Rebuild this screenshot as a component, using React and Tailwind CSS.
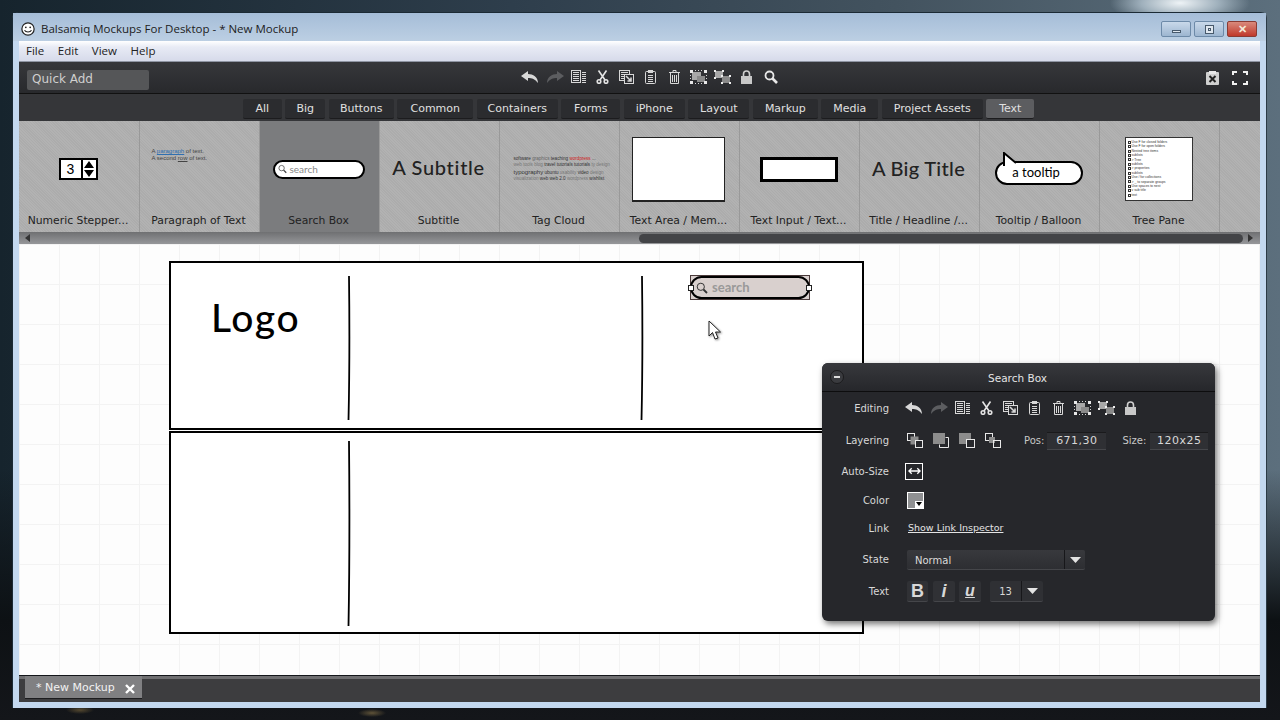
import React from "react";

const Undo = ({ c = "w-[18px] h-[14px] text-[#d8d8d8]" }) => (
  <svg viewBox="0 0 18 14" className={c} fill="currentColor"><path d="M7 1 L0 6 L7 11 V8 C11 8 14 9 17 13 C17 7 12 4 7 4 Z" /></svg>
);
const Redo = ({ c = "w-[18px] h-[14px] text-[#5c5d60]" }) => (
  <svg viewBox="0 0 18 14" className={c} fill="currentColor"><path d="M11 1 L18 6 L11 11 V8 C7 8 4 9 1 13 C1 7 6 4 11 4 Z" /></svg>
);
const ListI = () => (
  <svg viewBox="0 0 15 14" className="w-[15px] h-[14px]" fill="none" stroke="#d8d8d8" strokeWidth="1">
    <rect x="0.5" y="0.5" width="9" height="12" />
    <path d="M2 2.5h6M2 4.5h6M2 6.5h6M2 8.5h6M2 10.5h6M11 2.5h4M11 4.5h4M11 6.5h4M11 8.5h4M11 10.5h4M11 12.5h4" />
  </svg>
);
const Cut = () => (
  <svg viewBox="0 0 13 14" className="w-[13px] h-[14px]" fill="none" stroke="#e4e4e4" strokeWidth="1.6">
    <path d="M2.5 0.5 L9 10M10.5 0.5 L4 10" />
    <circle cx="3" cy="11.5" r="1.8" />
    <circle cx="10" cy="11.5" r="1.8" />
  </svg>
);
const Paste = () => (
  <svg viewBox="0 0 15 14" className="w-[15px] h-[14px]" fill="none" stroke="#d8d8d8" strokeWidth="1">
    <rect x="0.5" y="0.5" width="10" height="10" />
    <rect x="5.5" y="4.5" width="9" height="9" fill="#2a2b2f" />
    <path d="M2 2.5h7M2 4.5h3M2 6.5h3M2 8.5h3" />
    <path d="M7 6 L12 11M12 7.5V11H8.5" strokeWidth="1.6" />
  </svg>
);
const Clip = () => (
  <svg viewBox="0 0 11 14" className="w-[11px] h-[14px]" fill="none" stroke="#d8d8d8" strokeWidth="1">
    <rect x="0.5" y="1.5" width="10" height="12" rx="1" />
    <rect x="3" y="0" width="5" height="3" fill="#d8d8d8" stroke="none" />
    <path d="M3 5.5h5M3 7.5h5M3 9.5h5M3 11.5h5" />
  </svg>
);
const Trash = () => (
  <svg viewBox="0 0 11 14" className="w-[11px] h-[14px]" fill="none" stroke="#d8d8d8" strokeWidth="1">
    <path d="M0 2.5h11M4 2.5V0.5h3v2" />
    <path d="M1.5 3V13.5H9.5V3M3.5 5v7M5.5 5v7M7.5 5v7" />
  </svg>
);
const Group = () => (
  <svg viewBox="0 0 17 14" className="w-[17px] h-[14px]">
    <path d="M2 2h9v8H2z" fill="#a8a8a8" />
    <path d="M7 6h8v6H7z" fill="#8a8a8a" />
    <path d="M0 0h3v3H0zM14 0h3v3h-3zM0 11h3v3H0zM14 11h3v3h-3z" fill="#e8e8e8" />
    <path d="M5 0.5h1M8 0.5h1M11 0.5h1M0.5 5v1M0.5 8v1M5 13.5h1M8 13.5h1M11 13.5h1M16.5 5v1M16.5 8v1" stroke="#d8d8d8" />
  </svg>
);
const Ungroup = () => (
  <svg viewBox="0 0 17 14" className="w-[17px] h-[14px]">
    <path d="M1 1h8v7H1z" fill="#a8a8a8" />
    <path d="M8 6h8v7H8z" fill="#8a8a8a" />
    <path d="M0 0h2v2H0zM8 0h2v2H8zM0 7h2v2H0zM7 5h2v2H7zM15 5h2v2h-2zM7 12h2v2H7zM15 12h2v2h-2z" fill="#eeeeee" />
  </svg>
);
const Lock = () => (
  <svg viewBox="0 0 11 14" className="w-[11px] h-[14px]">
    <path d="M2.5 6V4a3 3 0 0 1 6 0v2" fill="none" stroke="#d0d0d0" strokeWidth="1.6" />
    <rect x="0" y="6" width="11" height="8" fill="#c8c8c8" />
  </svg>
);
const Search = () => (
  <svg viewBox="0 0 14 14" className="w-[14px] h-[14px]" fill="none" stroke="#e8e8e8">
    <circle cx="5.5" cy="5.5" r="4" strokeWidth="1.8" />
    <path d="M8.5 8.5 L13 13" strokeWidth="2.6" />
  </svg>
);

const EditIcons = () => (
  <>
    <Undo />
    <span className="ml-[7px]"><Redo /></span>
    <span className="ml-[7px]"><ListI /></span>
    <span className="ml-[10px]"><Cut /></span>
    <span className="ml-[10px]"><Paste /></span>
    <span className="ml-[11px]"><Clip /></span>
    <span className="ml-[13px]"><Trash /></span>
    <span className="ml-[10px]"><Group /></span>
    <span className="ml-[7px]"><Ungroup /></span>
    <span className="ml-[10px]"><Lock /></span>
  </>
);

const Layer = ({ kind }) => (
  <svg viewBox="0 0 16 15" className="w-[16px] h-[15px]" fill="none" stroke="#e8e8e8" strokeWidth="1">
    {kind === 1 && (<><rect x="0.5" y="0.5" width="7" height="7" /><rect x="3.5" y="3.5" width="8" height="8" fill="#8c8c8c" stroke="none" /><rect x="8.5" y="7.5" width="7" height="7" fill="#26272b" /></>)}
    {kind === 2 && (<><rect x="0" y="0" width="12" height="11" fill="#8c8c8c" stroke="none" /><path d="M12.5 4.5h3v10h-9v-3" /></>)}
    {kind === 3 && (<><rect x="0" y="0" width="12" height="11" fill="#8c8c8c" stroke="none" /><rect x="7.5" y="6.5" width="8" height="8" fill="#26272b" /></>)}
    {kind === 4 && (<><rect x="0.5" y="0.5" width="7" height="7" /><rect x="4" y="4" width="6" height="6" fill="#8c8c8c" stroke="none" /><rect x="8.5" y="7.5" width="7" height="7" /></>)}
  </svg>
);

const Tri = ({ c = "w-[11px] h-[6px]" }) => (
  <svg viewBox="0 0 11 6" className={c}><path d="M0 0h11L5.5 6z" fill="#e4e4e4" /></svg>
);

const tabs = [
  ["All", "w-[39px]"], ["Big", "w-[40px]"], ["Buttons", "w-[65px]"], ["Common", "w-[76px]"], ["Containers", "w-[81px]"],
  ["Forms", "w-[59px]"], ["iPhone", "w-[61px]"], ["Layout", "w-[61px]"], ["Markup", "w-[65px]"], ["Media", "w-[57px]"],
  ["Project Assets", "w-[101px]"], ["Text", "w-[48px]"],
];

const Glass = ({ c }) => (
  <svg viewBox="0 0 12 12" className={c} fill="none" stroke="currentColor">
    <circle cx="4.8" cy="4.8" r="3.6" strokeWidth="1" />
    <path d="M7.5 7.5 L11 11" strokeWidth="1.8" />
  </svg>
);

const Stepper = () => (
  <div className="flex w-[39px] h-[22px] border-2 border-black bg-white">
    <div className="w-[20px] flex items-center justify-center text-[14px] leading-none text-black font-['Liberation_Sans',sans-serif]">3</div>
    <div className="flex-1 border-l-2 border-black flex items-center justify-center">
      <svg viewBox="0 0 12 16" className="w-[12px] h-[16px]"><path d="M6 0l5 7H1zM6 16l5-7H1z" fill="#000" /></svg>
    </div>
  </div>
);
const Para = () => (
  <div className="w-[60px] mb-[28px] mr-[34px] text-[6px] leading-[7px] text-[#444] whitespace-nowrap font-['Liberation_Sans',sans-serif]">
    <div>A <span className="text-[#2f6fb0] underline">paragraph</span> of text.</div>
    <div>A second <span className="underline">row</span> of text.</div>
  </div>
);
const SearchPrev = () => (
  <div className="w-[92px] h-[19px] rounded-full border-2 border-black bg-white flex items-center pl-[3px] gap-[3px] text-[#888] text-[10px] font-['Lato',sans-serif]">
    <Glass c="w-[9px] h-[10px] text-[#444]" />
    <span>search</span>
  </div>
);
const Subtitle = () => (
  <div className="mb-[4px] text-[20px] leading-none text-[#222] whitespace-nowrap font-['Lato',sans-serif] font-medium tracking-[0.7px]">A Subtitle</div>
);
const Cloud = () => (
  <div className="w-[90px] text-[4.6px] leading-[6.5px] text-[#333] whitespace-nowrap font-['Liberation_Sans',sans-serif]">
    <div>software <span className="text-[#666]">graphics</span> teaching <span className="text-[#d02020]">wordpress</span> ...</div>
    <div><span className="text-[#777]">web tools blog</span> travel tutorials tutorials <span className="text-[#777]">ty design</span></div>
    <div><span className="text-[6px]">typography</span> ubuntu <span className="text-[#777]">usability</span> video <span className="text-[#777]">design</span></div>
    <div><span className="text-[#777]">visualization</span> web web 2.0 <span className="text-[#777]">wordpress</span> wishlist</div>
  </div>
);
const TextArea = () => <div className="w-[93px] h-[65px] bg-white border border-[#222] border-b-2" />;
const TextInput = () => <div className="w-[78px] h-[25px] bg-white border-[3px] border-black" />;
const BigTitle = () => (
  <div className="mb-[3px] text-[20px] leading-none text-[#222] whitespace-nowrap font-['Lato',sans-serif] font-medium tracking-[0.3px]">A Big Title</div>
);
const Tooltip = () => (
  <div className="relative w-[88px] h-[24px] mt-[7px] pr-[5px] pt-[1px] rounded-full border-2 border-black bg-white flex items-center justify-center text-[13px] text-black font-['Lato',sans-serif]">
    <svg viewBox="0 0 16 14" className="absolute left-[6px] -top-[11px] w-[16px] h-[14px]">
      <path d="M1 14 L1 1 L13 11" fill="#fff" stroke="#000" strokeWidth="2" />
      <path d="M3 14L3 6L12 14z" fill="#fff" />
    </svg>
    a tooltip
  </div>
);
const Tree = () => (
  <div className="w-[68px] h-[64px] bg-white border border-[#333] pl-[2px] pt-[2px] text-[3.4px] leading-[4.4px] text-[#333] whitespace-nowrap font-['Liberation_Sans',sans-serif]">
    {["Use F for closed folders", "Use F for open folders", "Nested tree items", "sublists", "> Tree", "sublists", "> properties", "sublists", "Use / for collections", "> _ to separate groups", "Use spaces to nest", "v sub title", "  text"].map((t, i) => (
      <div key={i} className="flex items-center gap-[1px]"><span className="w-[3px] h-[3px] border-[0.5px] border-[#333] shrink-0" />{t}</div>
    ))}
  </div>
);

const items = [
  ["Numeric Stepper...", <Stepper />, false, "w-[121px]"],
  ["Paragraph of Text", <Para />, false, "w-[120px]"],
  ["Search Box", <SearchPrev />, true, "w-[120px]"],
  ["Subtitle", <Subtitle />, false, "w-[120px]"],
  ["Tag Cloud", <Cloud />, false, "w-[120px]"],
  ["Text Area / Mem...", <TextArea />, false, "w-[120px]"],
  ["Text Input / Text...", <TextInput />, false, "w-[120px]"],
  ["Title / Headline /...", <BigTitle />, false, "w-[120px]"],
  ["Tooltip / Balloon", <Tooltip />, false, "w-[120px]"],
  ["Tree Pane", <Tree />, false, "w-[120px]"],
];

const Row = ({ label, h, children }) => (
  <div className={`flex items-center ${h}`}>
    <div className="w-[67px] text-right text-[10px] text-[#d8d8d8]">{label}</div>
    <div className="ml-[16px] flex items-center flex-1">{children}</div>
  </div>
);

const Field = ({ children, c }) => (
  <div className={`${c} h-[18px] mt-[1px] pt-[1px] bg-[#2f3034] border-t border-[#1a1a1c] border-b-[#45464a] border-b flex items-center justify-center text-[11px] text-[#d8d8d8] tracking-[0.5px]`}>{children}</div>
);

export default function App() {
  return (
    <div className="relative w-[1280px] h-[720px] overflow-hidden pl-[12px] pt-[12px] bg-[#10181d] bg-[radial-gradient(ellipse_70px_22px_at_1180px_3px,#eef3f6_0%,#9fb0bc_55%,transparent_100%),linear-gradient(90deg,#16242d_0%,#2e3e4c_40%,#43535f_70%,#5c6f7d_100%)] font-['DejaVu_Sans',sans-serif]">
      <div className="absolute left-0 right-0 bottom-0 h-[250px] bg-[radial-gradient(ellipse_14px_4px_at_80px_240px,#54482f_0%,transparent_100%),radial-gradient(ellipse_14px_4px_at_372px_243px,#5f5338_0%,transparent_100%),linear-gradient(180deg,transparent_0%,#0d1114_60%,#14161a_100%)]" />
      <div className="relative w-[1255px] h-[696px] flex flex-col rounded-t-[6px] border border-[#1b2a35] border-b-0 border-r-[#2b3a45] bg-[#c3d8ef]">
        <div className="h-[28px] shrink-0 flex items-center pt-[4px] pl-[8px] pr-[9px] bg-[linear-gradient(180deg,#a5bdd8_0%,#bccfe3_100%)]">
          <svg viewBox="0 0 16 16" className="w-[14px] h-[14px] shrink-0">
            <circle cx="8" cy="8" r="7" fill="#fff" stroke="#222" strokeWidth="1.4" />
            <circle cx="5.5" cy="6" r="1" fill="#222" /><circle cx="10.5" cy="6" r="1" fill="#222" />
            <path d="M4 9.5c1.5 2.5 6.5 2.5 8 0" fill="none" stroke="#222" strokeWidth="1.3" />
          </svg>
          <span className="ml-[6px] text-[11.5px] text-[#1c1c1c] font-['Open_Sans',sans-serif] whitespace-nowrap">Balsamiq Mockups For Desktop - * New Mockup</span>
          <div className="ml-auto flex gap-[3px]">
            <div className="w-[30px] h-[16px] rounded-[2px] border border-[#6d8aa8] bg-[linear-gradient(180deg,#c9d9ea,#9db6d0)] flex items-center justify-center"><span className="w-[9px] h-[3px] mt-[4px] bg-[#dfe7ef] border border-[#47596b]" /></div>
            <div className="w-[30px] h-[16px] rounded-[2px] border border-[#6d8aa8] bg-[linear-gradient(180deg,#c9d9ea,#9db6d0)] flex items-center justify-center"><span className="w-[9px] h-[9px] border border-[#47596b] bg-[#dfe7ef] flex items-center justify-center"><span className="w-[3px] h-[3px] border border-[#47596b]" /></span></div>
            <div className="w-[30px] h-[16px] rounded-[2px] border border-[#8a3b33] bg-[linear-gradient(180deg,#d98a7c,#c0392b)] flex items-center justify-center text-[11px] leading-none font-bold text-[#f4e9d8] font-['Liberation_Sans',sans-serif]">✕</div>
          </div>
        </div>
        <div className="mx-[6px] flex flex-col flex-1 min-h-0">
          <div className="h-[21px] shrink-0 border-b border-b-[#8f95a3] bg-[linear-gradient(180deg,#ffffff_0%,#e8ebf5_30%,#d6daea_100%)] flex items-center pl-[7px] gap-[13.6px] text-[11.5px] text-[#222] font-['Open_Sans',sans-serif]">
            <span>File</span><span>Edit</span><span>View</span><span>Help</span>
          </div>
          <div className="relative h-[32px] shrink-0 flex items-center justify-center bg-[linear-gradient(180deg,#36373b,#28292c)] border-b border-[#111]">
            <div className="absolute left-[8px] top-[8px] w-[122px] h-[20px] rounded-[2px] bg-[#555658] pl-[5px] text-[12px] leading-[18px] text-[#cfcfcf]">Quick Add</div>
            <div className="flex items-center ml-[14px] mr-[-6px] -mt-[1px]">
              <EditIcons />
              <span className="ml-[12px]"><Search /></span>
            </div>
            <div className="absolute right-[12px] top-[9px] flex items-center gap-[12px]">
              <svg viewBox="0 0 15 14" className="w-[15px] h-[14px]"><rect x="1" y="1" width="13" height="13" rx="1" fill="#d0d0d0" /><rect x="4" y="0" width="7" height="3" fill="#e8e8e8" /><path d="M4.5 5l6 6M10.5 5l-6 6" stroke="#222" strokeWidth="2" /></svg>
              <svg viewBox="0 0 16 14" className="w-[16px] h-[14px]" fill="none" stroke="#f0f0f0" strokeWidth="2"><path d="M5 1H1v3M11 1h4v3M5 13H1v-3M11 13h4v-3" /></svg>
            </div>
          </div>
          <div className="h-[27px] shrink-0 bg-[#353639] flex items-start justify-center pt-[5px] gap-[3.5px] pr-[2px]">
            {tabs.map(([t, w]) => (
              <div key={t} className={`${w} h-[20px] pt-[2px] rounded-[2px] border-b border-[#1c1c1e] flex items-center justify-center text-[11px] text-[#e0e0e0] ${t === "Text" ? "bg-[#5c5d60]" : "bg-[#2b2c2f]"}`}>{t}</div>
            ))}
          </div>
          <div className="h-[111px] shrink-0 flex bg-[#afafaf] bg-[repeating-linear-gradient(45deg,#b2b2b2_0px,#b2b2b2_1px,#acacac_1px,#acacac_2px)]">
            {items.map(([label, prev, sel, w]) => (
              <div key={label} className={`${w} shrink-0 flex flex-col border-r border-[#999] ${sel ? "bg-[#7b7c7e]" : ""}`}>
                <div className="h-[96px] pr-[2px] flex items-center justify-center">{prev}</div>
                <div className="-mt-[3px] pr-[2px] text-center text-[10.8px] leading-[14px] whitespace-nowrap text-[#222]">{label}</div>
              </div>
            ))}
          </div>
          <div className="h-[12px] shrink-0 flex items-center bg-[linear-gradient(180deg,#6f7072,#96979a)] pl-[6px] pr-[6px]">
            <svg viewBox="0 0 5 8" className="w-[5px] h-[8px] shrink-0"><path d="M5 0v8L0 4z" fill="#333" /></svg>
            <div className="ml-[609px] w-[604px] h-[9px] rounded-full bg-[#434447]" />
            <svg viewBox="0 0 5 8" className="ml-[5px] w-[5px] h-[8px] shrink-0"><path d="M0 0v8l5-4z" fill="#333" /></svg>
          </div>
          <div className="relative h-[431px] shrink-0 overflow-hidden bg-[#fdfdfd] bg-[linear-gradient(#f3f3f3_1px,transparent_1px),linear-gradient(90deg,#f3f3f3_1px,transparent_1px)] bg-[size:40px_40px]">
            <div className="absolute left-[150px] top-[17px] w-[695px] h-[169px] bg-white border-2 border-black" />
            <div className="absolute left-[150px] top-[187px] w-[695px] h-[203px] bg-white border-2 border-black" />
            <svg viewBox="0 0 6 145" className="absolute left-[327px] top-[32px] w-[6px] h-[144px]"><path d="M3 0 C3.5 40 3.5 100 2.5 145" fill="none" stroke="#000" strokeWidth="1.8" /></svg>
            <svg viewBox="0 0 6 145" className="absolute left-[620px] top-[32px] w-[6px] h-[144px]"><path d="M3 0 C3.5 40 3.5 100 2.5 145" fill="none" stroke="#000" strokeWidth="1.8" /></svg>
            <svg viewBox="0 0 6 185" className="absolute left-[327px] top-[197px] w-[6px] h-[185px]"><path d="M3 0 C3.5 50 3.5 130 2.5 185" fill="none" stroke="#000" strokeWidth="1.8" /></svg>
            <div className="absolute left-[192px] top-[46px] text-[39px] leading-[54px] tracking-[1.5px] text-black font-['Lato',sans-serif] font-medium">Logo</div>
            <div className="absolute left-[671px] top-[31px] w-[120px] h-[25px] bg-[#d9d0ce] border border-[#4a3a3a]">
              <div className="h-full -mx-px rounded-full border-2 border-black flex items-center pl-[4px] gap-[4px] text-[13px] text-[#999] font-bold font-['Lato',sans-serif]">
                <Glass c="w-[12px] h-[12px] text-[#333]" />
                <span>search</span>
              </div>
              <span className="absolute -left-[3px] top-[9px] w-[6px] h-[6px] bg-white border border-[#222]" />
              <span className="absolute -right-[3px] top-[9px] w-[6px] h-[6px] bg-white border border-[#222]" />
            </div>
            <svg viewBox="0 0 14 21" className="absolute left-[689px] top-[76px] w-[14px] h-[21px] drop-shadow-[1px_1px_1px_rgba(0,0,0,0.45)]">
              <path d="M1 1 V16 L4.5 12.5 L7 19 L10 18 L7.5 12 H12.5 Z" fill="#fff" stroke="#222" strokeWidth="1" />
            </svg>
            <div className="absolute left-[803px] top-[119px] w-[393px] h-[258px] rounded-[6px] bg-[#26272b] shadow-[2px_3px_6px_rgba(0,0,0,0.55)] flex flex-col">
              <div className="relative h-[29px] shrink-0 pt-[4px] pr-[2px] border-b border-[#0d0d0e] bg-[linear-gradient(180deg,#37383c,#26272b)] rounded-t-[6px] flex items-center justify-center text-[10.5px] text-[#e4e4e4]">
                <span className="absolute left-[8px] top-[7px] w-[14px] h-[14px] rounded-full bg-[#3a3b3f] border border-[#1b1b1d] flex items-center justify-center"><span className="w-[6px] h-[2px] bg-[#ddd]" /></span>
                Search Box
              </div>
              <Row label="Editing" h="h-[32px]"><EditIcons /></Row>
              <Row label="Layering" h="h-[32px]">
                <span className="ml-[2px]"><Layer kind={1} /></span>
                <span className="ml-[10px]"><Layer kind={2} /></span>
                <span className="ml-[10px]"><Layer kind={3} /></span>
                <span className="ml-[10px]"><Layer kind={4} /></span>
                <span className="ml-[23px] mt-[1px] text-[10px] text-[#c8c8c8]">Pos:</span>
                <Field c="ml-[3px] w-[59px]">671,30</Field>
                <span className="ml-[16px] mt-[1px] text-[10px] text-[#c8c8c8]">Size:</span>
                <Field c="ml-[4px] w-[58px]">120x25</Field>
              </Row>
              <Row label="Auto-Size" h="h-[30px]">
                <div className="w-[18px] h-[17px] border border-white flex items-center justify-center">
                  <svg viewBox="0 0 14 8" className="w-[13px] h-[8px]" fill="none" stroke="#fff" strokeWidth="1.4"><path d="M1 4h12M4 1L1 4l3 3M10 1l3 3-3 3" /></svg>
                </div>
              </Row>
              <Row label="Color" h="h-[28px]">
                <div className="relative ml-[2px] w-[17px] h-[17px] border border-white bg-[#8f9092]">
                  <span className="absolute right-0 bottom-0 w-[8px] h-[7px] bg-white flex items-center justify-center">
                    <svg viewBox="0 0 6 4" className="w-[6px] h-[4px]"><path d="M0 0h6L3 4z" fill="#000" /></svg>
                  </span>
                </div>
              </Row>
              <Row label="Link" h="h-[28px]">
                <span className="ml-[3px] text-[9.5px] text-[#e4e4e4] underline">Show Link Inspector</span>
              </Row>
              <Row label="State" h="h-[34px]">
                <div className="ml-[2px] mt-[2px] w-[178px] h-[20px] flex bg-[linear-gradient(180deg,#38393d,#2d2e32)] border-b border-[#45464a] rounded-[2px]">
                  <div className="flex-1 flex items-center pl-[8px] pt-[1px] text-[10px] text-[#dcdcdc] border-r border-[#17171a]">Normal</div>
                  <div className="w-[20px] flex items-center justify-center"><Tri /></div>
                </div>
              </Row>
              <Row label="Text" h="h-[30px]">
                <div className="ml-[2px] w-[21px] h-[21px] flex items-center justify-center rounded-[2px] bg-[#303135] border-b border-[#45464a] text-[18px] leading-none font-bold text-[#d8d8d8] font-['Liberation_Sans',sans-serif]">B</div>
                <div className="ml-[5px] w-[22px] h-[21px] flex items-center justify-center rounded-[2px] bg-[#303135] border-b border-[#45464a] text-[18px] leading-none font-bold italic text-[#d8d8d8] font-['Liberation_Sans',sans-serif]">i</div>
                <div className="ml-[4px] w-[22px] h-[21px] flex items-center justify-center rounded-[2px] bg-[#303135] border-b border-[#45464a] text-[16px] leading-none font-bold italic underline text-[#d8d8d8] font-['Liberation_Sans',sans-serif]">u</div>
                <div className="ml-[9px] w-[53px] h-[21px] flex rounded-[2px] bg-[#2f3034] border-b border-[#45464a]">
                  <div className="w-[32px] pt-[1px] flex items-center justify-center text-[10px] text-[#d8d8d8] border-r border-[#17171a]">13</div>
                  <div className="flex-1 flex items-center justify-center"><Tri /></div>
                </div>
              </Row>
            </div>
          </div>
          <div className="h-[27px] shrink-0 bg-[linear-gradient(180deg,#6f6f71_0px,#6f6f71_3px,#3d3d3f_3px)] border-t border-[#14161a] pl-[6px]">
            <div className="w-[117px] h-[23px] pt-[3px] bg-[#808082] border-b border-[#1c1c1e] flex items-center pl-[11px] text-[11px] text-[#f2f2f2] whitespace-nowrap">
              <span>* New Mockup</span>
              <svg viewBox="0 0 10 10" className="ml-auto mr-[7px] w-[10px] h-[10px]"><path d="M1 1l8 8M9 1l-8 8" stroke="#fff" strokeWidth="2.4" /></svg>
            </div>
          </div>
        </div>
      </div>
    </div>
  );
}
